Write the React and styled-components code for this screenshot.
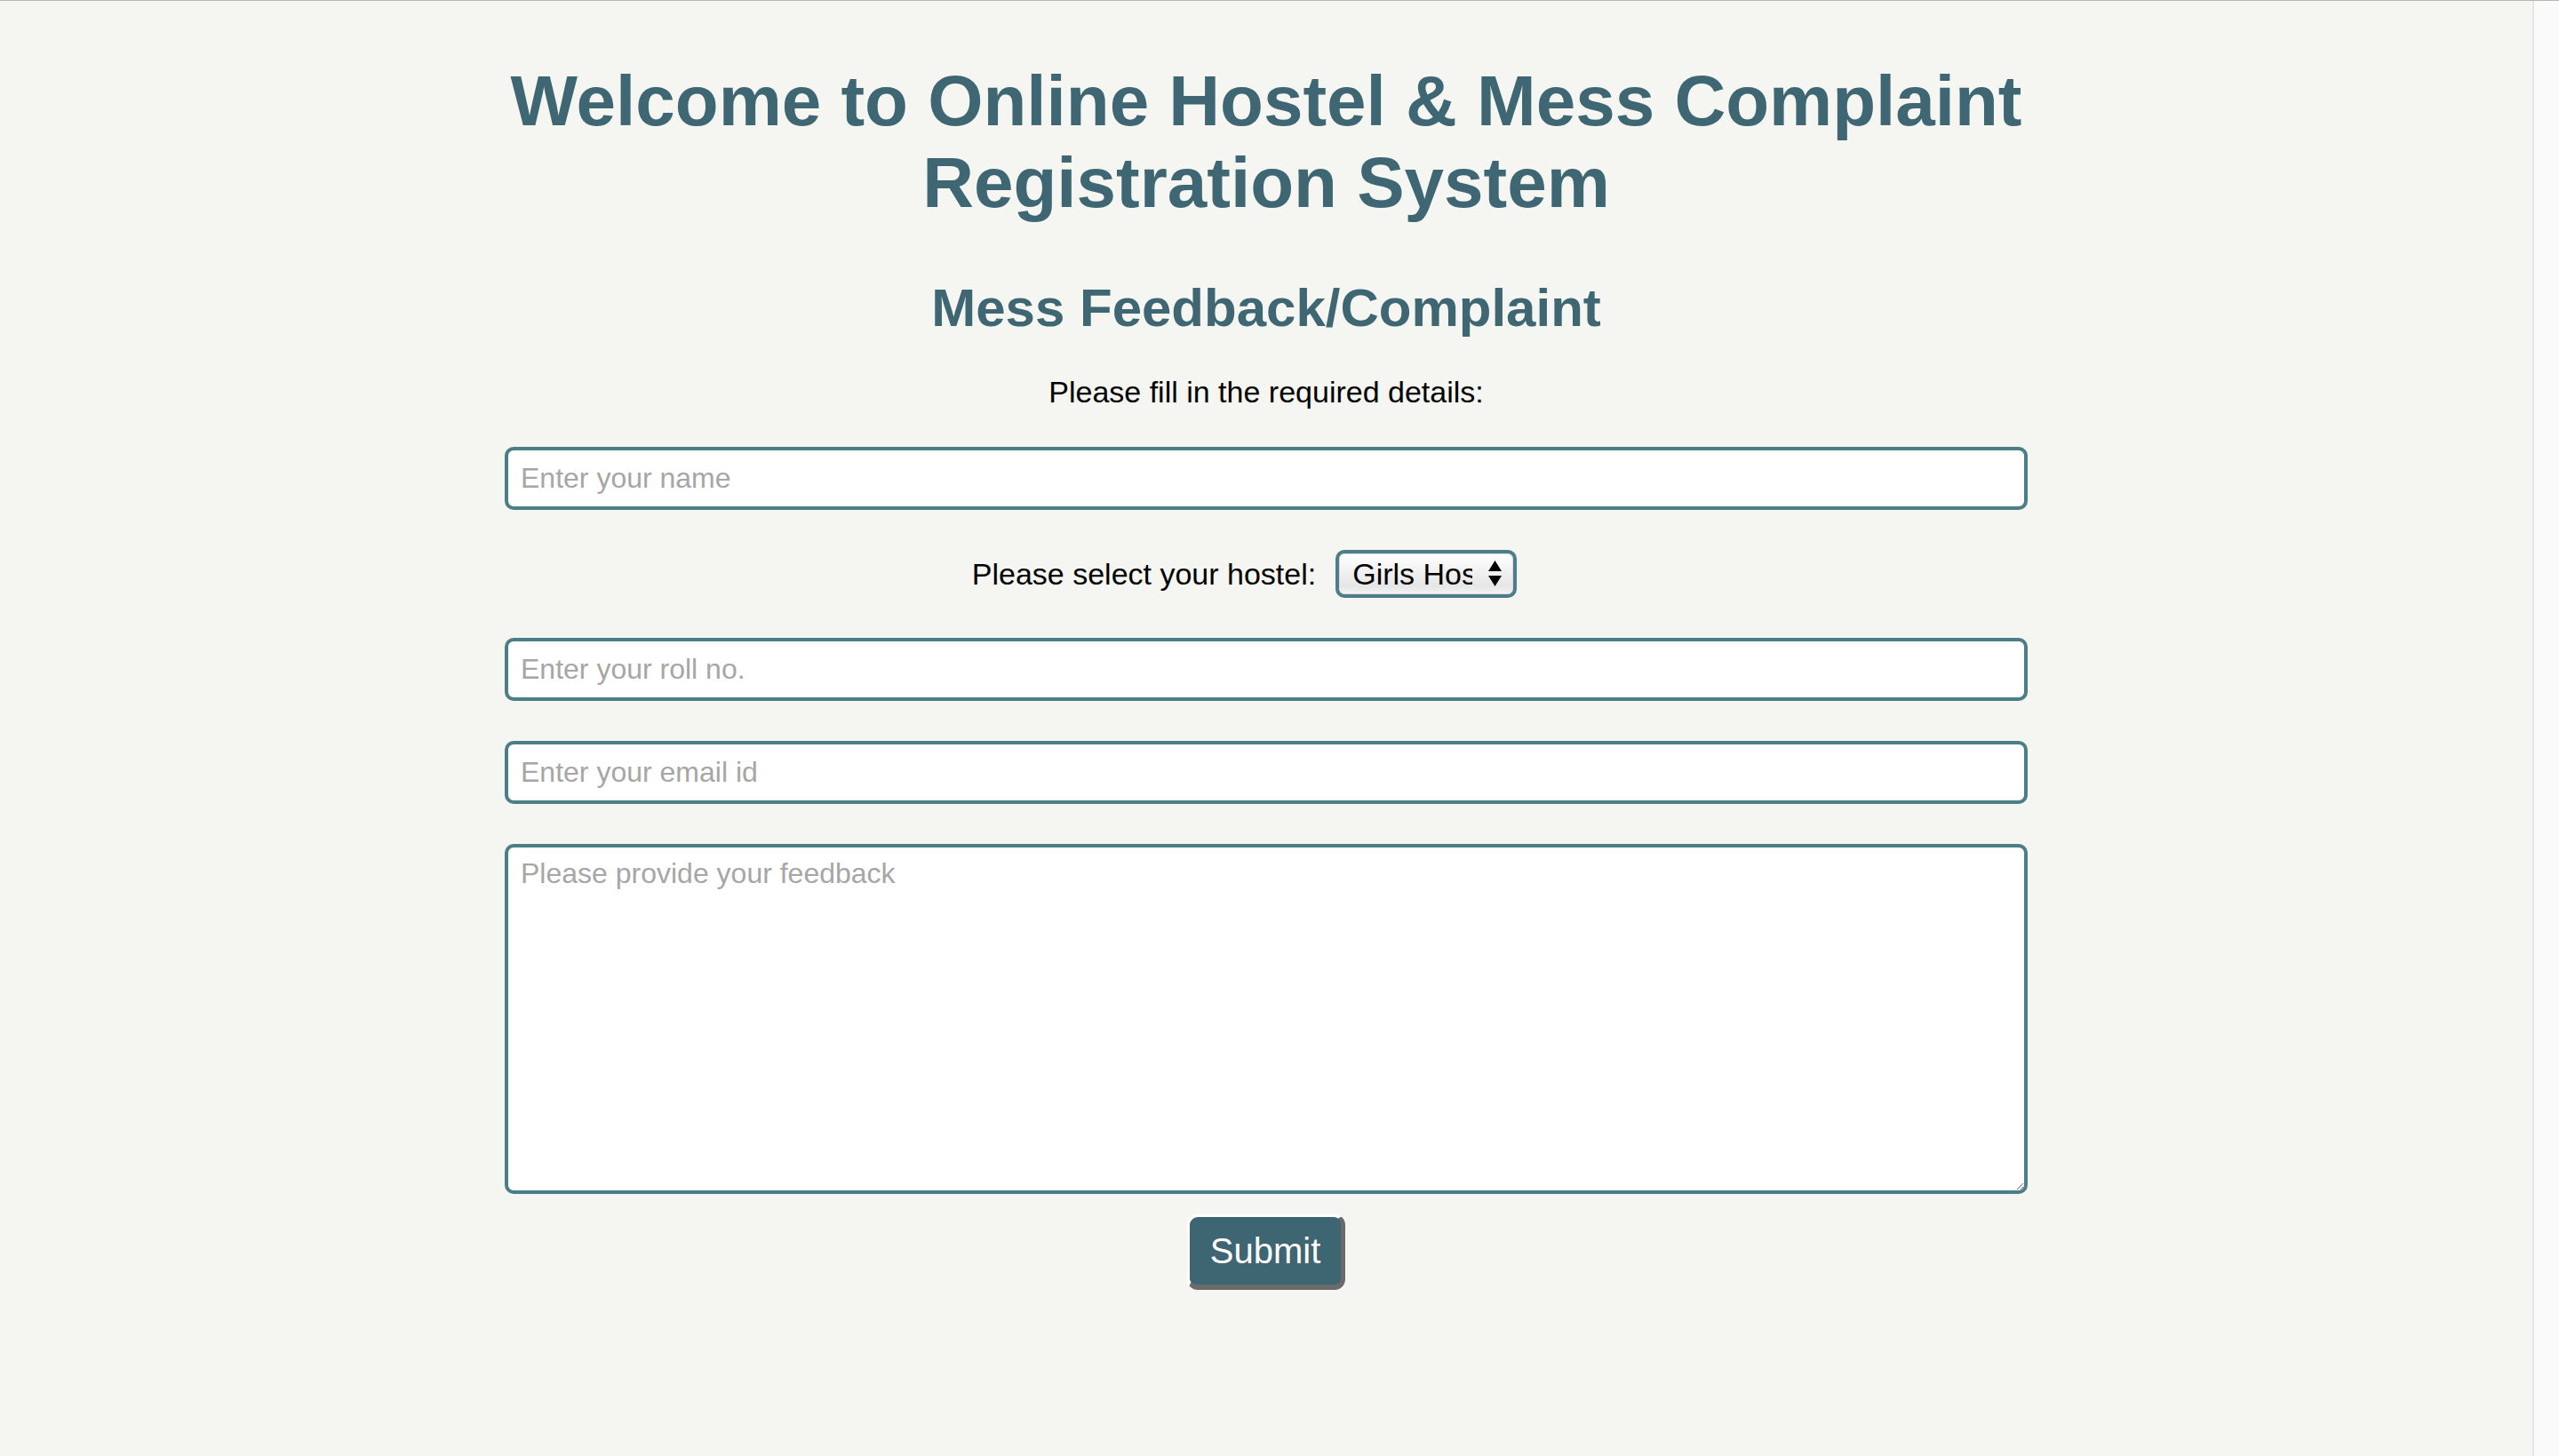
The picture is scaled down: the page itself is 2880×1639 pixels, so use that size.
import React from "react";
import styled, { createGlobalStyle } from "styled-components";

const GlobalStyle = createGlobalStyle`
  * {
    box-sizing: border-box;
  }
  html, body {
    margin: 0;
    padding: 0;
    background-color: #f5f5f1;
    font-family: "Liberation Sans", Helvetica, Arial, sans-serif;
  }
`;

const Page = styled.div`
  min-height: 100vh;
  display: flex;
  border-top: 1px solid #b7b7b3;
  background-color: #f5f5f1;
`;

const Main = styled.main`
  flex: 1;
  display: flex;
  flex-direction: column;
  align-items: center;
  padding-top: 67px;
`;

const ScrollTrack = styled.div`
  width: 30px;
  flex-shrink: 0;
  background-color: #fafafa;
  border-left: 2px solid #e6e6e6;
`;

const Title = styled.h1`
  margin: 0;
  max-width: 1760px;
  font-size: 80px;
  line-height: 92px;
  font-weight: 700;
  text-align: center;
  color: #3e6673;
`;

const SubTitle = styled.h2`
  margin: 60px 0 0;
  font-size: 60px;
  line-height: 69px;
  font-weight: 700;
  text-align: center;
  color: #3e6673;
`;

const Note = styled.p`
  margin: 41px 0 0;
  font-size: 34px;
  line-height: 39px;
  color: #000;
`;

const Form = styled.form`
  width: 1714px;
  margin-top: 42px;
  display: flex;
  flex-direction: column;
  align-items: center;
`;

const Fields = styled.div`
  width: 100%;
  display: flex;
  flex-direction: column;
  gap: 45px;
`;

const TextField = styled.input`
  width: 100%;
  height: 71px;
  padding: 0 14px;
  border: 4px solid #4b7e86;
  border-radius: 10px;
  background-color: #fff;
  font-family: inherit;
  font-size: 32px;
  color: #000;
  outline: none;

  &::placeholder {
    color: #a6a6a6;
  }
`;

const Feedback = styled.textarea`
  width: 100%;
  height: 394px;
  padding: 11px 14px;
  border: 4px solid #4b7e86;
  border-radius: 10px;
  background-color: #fff;
  font-family: inherit;
  font-size: 32px;
  color: #000;
  outline: none;
  resize: vertical;

  &::placeholder {
    color: #a6a6a6;
  }
`;

const HostelRow = styled.div`
  display: flex;
  align-items: center;
  justify-content: center;
  gap: 22px;
  padding-right: 49px;
`;

const Label = styled.label`
  font-size: 34px;
  line-height: 39px;
  color: #000;
`;

const SelectWrap = styled.div`
  position: relative;
  width: 204px;
  height: 54px;
`;

const HostelSelect = styled.select`
  appearance: none;
  -webkit-appearance: none;
  width: 100%;
  height: 100%;
  padding: 0 46px 0 15px;
  border: 4px solid #4b7e86;
  border-radius: 10px;
  background: linear-gradient(to bottom, #ffffff 0%, #f1f1f1 45%, #e6e6e6 80%, #f4f4f4 100%);
  box-shadow: inset 0 0 0 1px #dcdcdc;
  font-family: inherit;
  font-size: 34px;
  color: #000;
  outline: none;
`;

const Arrows = styled.svg`
  position: absolute;
  left: 172px;
  top: 12px;
  pointer-events: none;
`;

const SubmitButton = styled.button`
  margin-top: 23px;
  padding: 0 23px;
  height: 85px;
  border-style: solid;
  border-width: 3px 5px 6px 3px;
  border-color: #ffffff #6b6b6b #6b6b6b #ffffff;
  border-radius: 12px;
  background-color: #3d6572;
  color: #fff;
  font-family: inherit;
  font-size: 40px;
  cursor: pointer;
`;

const hostels = ["Girls Hostel", "Boys Hostel 1", "Boys Hostel 2"];

const App = () => {
  return (
    <>
      <GlobalStyle />
      <Page>
        <Main>
          <Title>Welcome to Online Hostel &amp; Mess Complaint Registration System</Title>
          <SubTitle>Mess Feedback/Complaint</SubTitle>
          <Note>Please fill in the required details:</Note>
          <Form onSubmit={(e) => e.preventDefault()}>
            <Fields>
              <TextField type="text" placeholder="Enter your name" />
              <HostelRow>
                <Label htmlFor="hostel">Please select your hostel:</Label>
                <SelectWrap>
                  <HostelSelect id="hostel" defaultValue={hostels[0]}>
                    {hostels.map((h) => (
                      <option key={h} value={h}>
                        {h}
                      </option>
                    ))}
                  </HostelSelect>
                  <Arrows width="15" height="29" viewBox="0 0 15 29">
                    <polygon points="7.5,0 15,12 0,12" fill="#000" />
                    <polygon points="0,17 15,17 7.5,29" fill="#000" />
                  </Arrows>
                </SelectWrap>
              </HostelRow>
              <TextField type="text" placeholder="Enter your roll no." />
              <TextField type="email" placeholder="Enter your email id" />
              <Feedback placeholder="Please provide your feedback" />
            </Fields>
            <SubmitButton type="submit">Submit</SubmitButton>
          </Form>
        </Main>
        <ScrollTrack />
      </Page>
    </>
  );
};

export default App;
